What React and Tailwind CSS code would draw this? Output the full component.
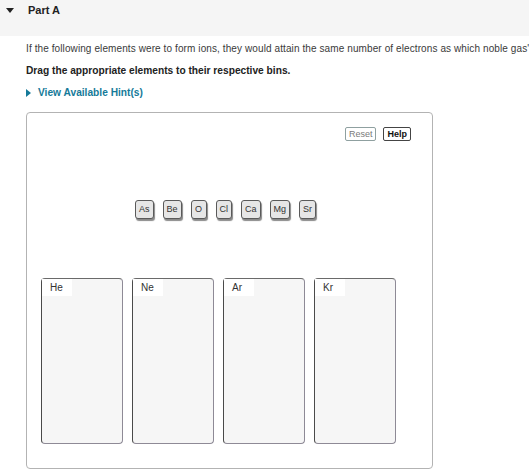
import React from "react";

const tiles = ["As", "Be", "O", "Cl", "Ca", "Mg", "Sr"];
const bins = ["He", "Ne", "Ar", "Kr"];

const App = () => {
  return (
    <div className="w-[529px] h-[474px] bg-white overflow-hidden font-['Liberation_Sans',Arial,sans-serif] text-[#333]">
      {/* Part header */}
      <div className="h-[36px] bg-[#f5f5f5] flex items-start pt-[3px]">
        <svg className="ml-[6px] mt-[5px]" width="8" height="5" viewBox="0 0 8 5">
          <path d="M0 0 L8 0 L4 5 Z" fill="#222" />
        </svg>
        <span className="ml-[14px] text-[11px] leading-[14px] font-bold text-[#222]">Part A</span>
      </div>

      <div className="pl-[26px]">
        <p className="mt-[7px] text-[10px] tracking-[0.1px] leading-[12px] whitespace-nowrap text-[#3a3a3a]">
          If the following elements were to form ions, they would attain the same number of electrons as which noble gas'
        </p>
        <p className="mt-[10px] text-[10.2px] leading-[12px] font-bold text-[#222]">
          Drag the appropriate elements to their respective bins.
        </p>
        <div className="mt-[10px] flex items-center text-[10.2px] leading-[12px] font-bold text-[#157a99]">
          <svg className="mr-[7px]" width="5" height="8" viewBox="0 0 5 8">
            <path d="M0 0 L5 4 L0 8 Z" fill="#157a99" />
          </svg>
          <span>View Available Hint(s)</span>
        </div>

        {/* Drag and drop area */}
        <div className="mt-[13px] w-[407px] h-[357px] border border-[#b3b3b3] rounded-[4px] flex flex-col">
          <div className="mt-[14px] mr-[21px] flex justify-end gap-[7px]">
            <button className="h-[14px] px-[3px] border border-[#8fa0a0] rounded-[2px] text-[9px] leading-[12px] text-[#7a7a7a]">
              Reset
            </button>
            <button className="h-[14px] px-[3px] border border-[#444] rounded-[2px] text-[9px] leading-[12px] font-bold text-[#111]">
              Help
            </button>
          </div>

          <div className="mt-[59px] ml-[108px] flex gap-[9px]">
            {tiles.map((t) => (
              <div
                key={t}
                className="h-[19px] min-w-[16px] px-[3px] flex items-center justify-center border border-[#5a5a5a] rounded-[3px] bg-[#e6e6e6] text-[9px] text-[#333] shadow-[1px_2px_1px_#8a8a8a]"
              >
                {t}
              </div>
            ))}
          </div>

          <div className="mt-[59px] ml-[14px] flex gap-[9px]">
            {bins.map((b) => (
              <div
                key={b}
                className="w-[82px] h-[166px] bg-[#f6f6f6] border border-[#8e8a96] border-l-[#4a4a4a] border-t-[#6a6a6a] rounded-[4px]"
              >
                <div className="w-[30px] h-[17px] bg-white pl-[8px] text-[10px] leading-[17px] text-[#333]">
                  {b}
                </div>
              </div>
            ))}
          </div>
        </div>
      </div>
    </div>
  );
};

export default App;
